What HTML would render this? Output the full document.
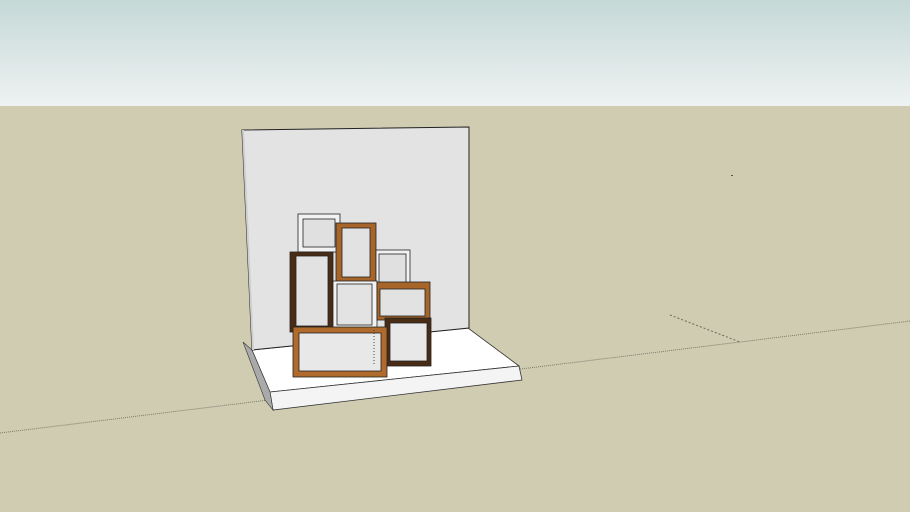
<!DOCTYPE html>
<html><head><style>html,body{margin:0;padding:0;width:910px;height:512px;overflow:hidden}</style></head>
<body>
<svg width="910" height="512" viewBox="0 0 910 512" xmlns="http://www.w3.org/2000/svg">
<defs><linearGradient id="sky" x1="0" y1="0" x2="0" y2="1"><stop offset="0" stop-color="#c5d9d7"/><stop offset="1" stop-color="#eef2f2"/></linearGradient></defs>
<rect x="0" y="0" width="910" height="106" fill="url(#sky)"/>
<rect x="0" y="106" width="910" height="406" fill="#d0ccb2"/>
<!-- axes -->
<polyline points="0,433 740,342 910,321" fill="none" stroke="#7a7a6a" stroke-width="1" stroke-dasharray="1,1"/>
<line x1="670" y1="315" x2="740" y2="342" stroke="#6a6a5a" stroke-dasharray="2,2"/>
<!-- slab -->
<polygon points="243,342 252,350 270,392 273,410 255,360" fill="#9a9a90"/>
<polygon points="252,350 468,328 519,366 270,392" fill="#ffffff" stroke="#333" stroke-width="0.8"/>
<polygon points="270,392 519,366 522,380 273,410" fill="#f4f4f4" stroke="#333" stroke-width="0.8"/>
<polygon points="243,342 252,350 270,392 273,410 265,400" fill="#aaa" stroke="#333" stroke-width="0.6"/>
<!-- wall -->
<polygon points="242,130 469,127 469,328 252,350" fill="#e3e3e3" stroke="#222" stroke-width="1"/>
<polygon points="242,130 244,130 254,350 252,350" fill="#cfcfcf"/>
<!-- shadow -->
<polygon points="300,355 385,348 385,368 300,372" fill="#bbbbbb"/>
<polygon points="390,345 425,342 425,360 390,362" fill="#bbbbbb"/>
<!-- boxes -->
<g stroke="#222" stroke-width="0.8">
<!-- white top -->
<rect x="298" y="214" width="42" height="38" fill="#f2f2f2"/>
<rect x="303" y="219" width="32" height="28" fill="#e0e0e0"/>
<!-- orange tall -->
<rect x="336" y="223" width="40" height="59" fill="#a8652a"/>
<rect x="342" y="228" width="28" height="49" fill="#e2e2e2"/>
<!-- white small right -->
<rect x="376" y="250" width="34" height="38" fill="#f2f2f2"/>
<rect x="379" y="254" width="27" height="30" fill="#e0e0e0"/>
<!-- dark tall left -->
<rect x="290" y="252" width="43" height="80" fill="#4a2c14"/>
<rect x="296" y="256" width="32" height="70" fill="#e2e2e2"/>
<!-- white middle -->
<rect x="333" y="281" width="44" height="48" fill="#f2f2f2"/>
<rect x="337" y="284" width="35" height="41" fill="#e3e3e3"/>
<!-- orange right -->
<rect x="377" y="282" width="53" height="38" fill="#a8652a"/>
<rect x="380" y="289" width="45" height="27" fill="#e2e2e2"/>
<!-- dark bottom right -->
<rect x="385" y="318" width="46" height="48" fill="#4a2c14"/>
<rect x="390" y="323" width="37" height="38" fill="#e8e8e8"/>
<!-- bottom orange wide -->
<rect x="293" y="327" width="94" height="50" fill="#b06a2c"/>
<rect x="299" y="333" width="82" height="38" fill="#e8e8e8"/>
</g>
<line x1="374" y1="330" x2="374" y2="365" stroke="#444" stroke-dasharray="1,2"/>
<rect x="731" y="175" width="2" height="1" fill="#555"/>
</svg>
</body></html>
